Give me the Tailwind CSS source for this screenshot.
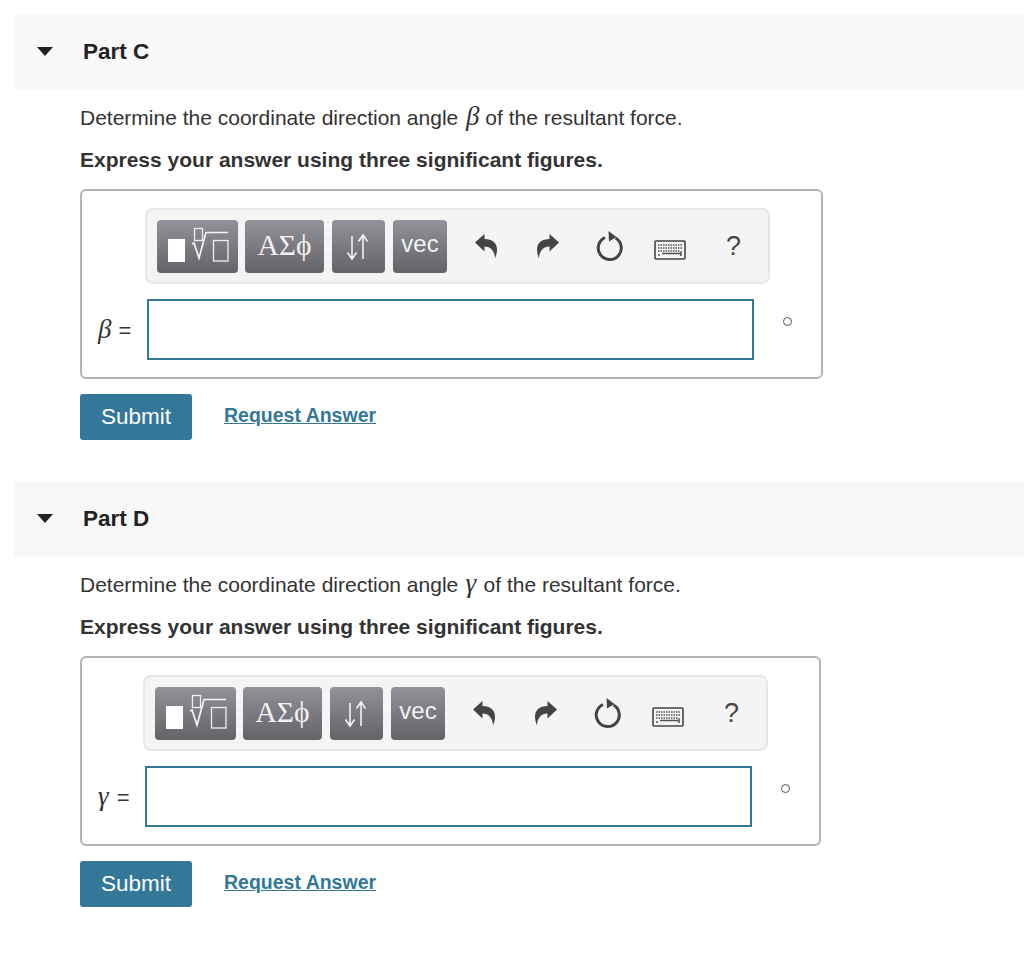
<!DOCTYPE html>
<html lang="en">
<head>
  <meta charset="UTF-8">
  <title>Part C and Part D</title>
  <script src="https://cdn.jsdelivr.net/npm/@tailwindcss/browser@4"></script>
</head>
<body class="bg-white font-['Liberation_Sans',Arial,sans-serif] text-[#333]">
  <!-- shared icons -->
  <svg width="0" height="0" class="absolute">
    <symbol id="i-caret" viewBox="0 0 16 9"><path d="M0 0H16L8 9Z" fill="#222"/></symbol>
    <symbol id="i-templates" viewBox="0 0 81 53">
      <rect x="11" y="19" width="17" height="23" fill="#fff"/>
      <rect x="37.500" y="8.500" width="8" height="12" fill="none" stroke="#eee" stroke-width="1.300"/>
      <path d="M35 24L37 23L42 38L49 12.500H71" fill="none" stroke="#f4f4f4" stroke-width="1.700"/>
      <rect x="56.500" y="20.500" width="14.500" height="20.500" fill="none" stroke="#eee" stroke-width="1.300"/>
    </symbol>
    <symbol id="i-updown" viewBox="0 0 53 53">
      <path d="M20 16V38M15.500 32.500L20 39L24.500 32.500M31 39V16M26.500 21.500L31 15L35.500 21.500" fill="none" stroke="#f2f2f2" stroke-width="1.600"/>
    </symbol>
    <symbol id="i-undo" viewBox="0 0 22 26"><path d="M0 9.500L9.500 1V6C17 6 22 10 22 16.500C22 20 21 23 20 25.500C20 20 17 13.500 9.500 13.500V18.500Z" fill="#444"/></symbol>
    <symbol id="i-redo" viewBox="0 0 22 26"><path d="M22 9.500L12.500 1V6C5 6 0 10 0 16.500C0 20 1 23 2 25.500C2 20 5 13.500 12.500 13.500V18.500Z" fill="#444"/></symbol>
    <symbol id="i-reset" viewBox="0 0 28 30">
      <path d="M9 6.500A11.500 11.500 0 1 0 19.500 7" fill="none" stroke="#444" stroke-width="3"/>
      <path d="M12.500 0L20.500 6L13 10.500Z" fill="#444"/>
    </symbol>
    <symbol id="i-keyboard" viewBox="0 0 32 20">
      <rect x="1" y="1" width="30" height="18" rx="1" fill="#f4f4f4" stroke="#444" stroke-width="1.600"/>
      <path d="M4 5H28M4 8H28M4 11H26" stroke="#555" stroke-width="1.300" stroke-dasharray="1.500 1"/>
      <path d="M27 11V13.500H8M4 15H6M26 15H28" stroke="#555" stroke-width="1.300" fill="none"/>
    </symbol>
  </svg>

  <main class="pt-[14px] pl-[14px]">
    <!-- Part C -->
    <section class="h-[467px]">
      <header class="h-[75px] bg-[#f8f8f8] flex items-center pl-[23px]">
        <svg class="w-4 h-[9px] mr-[30px]"><use href="#i-caret"/></svg>
        <h2 class="text-[22.500px] font-bold text-[#222]">Part C</h2>
      </header>
      <div class="pl-[66px]">
        <p class="mt-[15px] h-7 text-[21px] leading-7">Determine the coordinate direction angle <i class="ml-[2px] font-['Liberation_Serif',serif] text-[27px] leading-[0]">β</i> of the resultant force.</p>
        <p class="mt-[14px] text-[21px] leading-7 font-bold">Express your answer using three significant figures.</p>
        <div class="mt-[15px] w-[743px] h-[190px] border-2 border-[#b4b4b4] rounded-md pt-[17px]">
          <div class="ml-[63px] w-[625px] h-[76px] border-2 border-[#e6e6e6] bg-[#f4f4f4] rounded-lg flex items-center pl-[10px]">
            <div class="w-[81px] h-[53px] rounded bg-gradient-to-b from-[#93929a] to-[#646368]"><svg class="w-[81px] h-[53px]"><use href="#i-templates"/></svg></div>
            <div class="ml-[7px] w-[79px] h-[53px] rounded bg-gradient-to-b from-[#93929a] to-[#646368] text-[#f2f2f2] font-['Liberation_Serif',serif] text-[29.500px] leading-[50px] text-center">ΑΣϕ</div>
            <div class="ml-2 w-[53px] h-[53px] rounded bg-gradient-to-b from-[#93929a] to-[#646368]"><svg class="w-[53px] h-[53px]"><use href="#i-updown"/></svg></div>
            <div class="ml-2 w-[54px] h-[53px] rounded bg-gradient-to-b from-[#93929a] to-[#646368] text-[#f2f2f2] text-[24px] leading-[48px] text-center">vec</div>
            <svg class="ml-7 w-[22px] h-[26px]"><use href="#i-undo"/></svg>
            <svg class="ml-10 w-[22px] h-[26px]"><use href="#i-redo"/></svg>
            <svg class="ml-[37px] w-7 h-[30px]"><use href="#i-reset"/></svg>
            <svg class="ml-[30px] mt-[7px] w-8 h-5"><use href="#i-keyboard"/></svg>
            <span class="ml-10 text-[27px] text-[#444]">?</span>
          </div>
          <div class="mt-[15px] flex items-center">
            <div class="w-[65px] pl-4 pt-[2px] text-[22px] leading-7"><i class="mr-px font-['Liberation_Serif',serif] text-[27px] leading-[0]">β</i> =</div>
            <div class="w-[607px] h-[61px] border-2 border-[#337899] bg-white"></div>
            <span class="ml-[29px] mb-[16px] w-[9px] h-[9px] rounded-full border-[1.500px] border-[#555]"></span>
          </div>
        </div>
        <div class="mt-[15px] flex">
          <button class="w-[112px] h-[46px] rounded-[3px] bg-[#337899] text-white text-[22.500px]">Submit</button>
          <a href="#" class="ml-8 mt-[6px] text-[19.500px] leading-[30px] font-bold text-[#337899] underline">Request Answer</a>
        </div>
      </div>
    </section>

    <!-- Part D -->
    <section>
      <header class="h-[75px] bg-[#f8f8f8] flex items-center pl-[23px]">
        <svg class="w-4 h-[9px] mr-[30px]"><use href="#i-caret"/></svg>
        <h2 class="text-[22.500px] font-bold text-[#222]">Part D</h2>
      </header>
      <div class="pl-[66px]">
        <p class="mt-[15px] h-7 text-[21px] leading-7">Determine the coordinate direction angle <i class="mx-[1.500px] font-['Liberation_Serif',serif] text-[27px] leading-[0]">γ</i> of the resultant force.</p>
        <p class="mt-[14px] text-[21px] leading-7 font-bold">Express your answer using three significant figures.</p>
        <div class="mt-[15px] w-[741px] h-[190px] border-2 border-[#b4b4b4] rounded-md pt-[17px]">
          <div class="ml-[61px] w-[625px] h-[76px] border-2 border-[#e6e6e6] bg-[#f4f4f4] rounded-lg flex items-center pl-[10px]">
            <div class="w-[81px] h-[53px] rounded bg-gradient-to-b from-[#93929a] to-[#646368]"><svg class="w-[81px] h-[53px]"><use href="#i-templates"/></svg></div>
            <div class="ml-[7px] w-[79px] h-[53px] rounded bg-gradient-to-b from-[#93929a] to-[#646368] text-[#f2f2f2] font-['Liberation_Serif',serif] text-[29.500px] leading-[50px] text-center">ΑΣϕ</div>
            <div class="ml-2 w-[53px] h-[53px] rounded bg-gradient-to-b from-[#93929a] to-[#646368]"><svg class="w-[53px] h-[53px]"><use href="#i-updown"/></svg></div>
            <div class="ml-2 w-[54px] h-[53px] rounded bg-gradient-to-b from-[#93929a] to-[#646368] text-[#f2f2f2] text-[24px] leading-[48px] text-center">vec</div>
            <svg class="ml-7 w-[22px] h-[26px]"><use href="#i-undo"/></svg>
            <svg class="ml-10 w-[22px] h-[26px]"><use href="#i-redo"/></svg>
            <svg class="ml-[37px] w-7 h-[30px]"><use href="#i-reset"/></svg>
            <svg class="ml-[30px] mt-[7px] w-8 h-5"><use href="#i-keyboard"/></svg>
            <span class="ml-10 text-[27px] text-[#444]">?</span>
          </div>
          <div class="mt-[15px] flex items-center">
            <div class="w-[63px] pl-4 pt-[2px] text-[22px] leading-7"><i class="mr-[2px] font-['Liberation_Serif',serif] text-[27px] leading-[0]">γ</i> =</div>
            <div class="w-[607px] h-[61px] border-2 border-[#337899] bg-white"></div>
            <span class="ml-[29px] mb-[16px] w-[9px] h-[9px] rounded-full border-[1.500px] border-[#555]"></span>
          </div>
        </div>
        <div class="mt-[15px] flex">
          <button class="w-[112px] h-[46px] rounded-[3px] bg-[#337899] text-white text-[22.500px]">Submit</button>
          <a href="#" class="ml-8 mt-[6px] text-[19.500px] leading-[30px] font-bold text-[#337899] underline">Request Answer</a>
        </div>
      </div>
    </section>
  </main>
</body>
</html>
